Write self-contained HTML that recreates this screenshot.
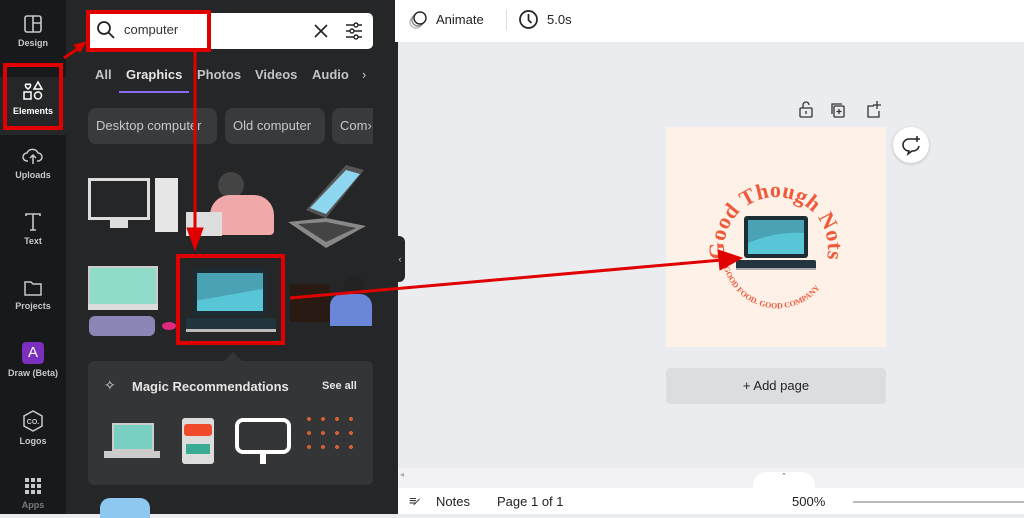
<!DOCTYPE html>
<html><head><meta charset="utf-8"><style>
*{margin:0;padding:0;box-sizing:border-box}
body{width:1024px;height:514px;overflow:hidden;position:relative;font-family:"Liberation Sans",sans-serif;background:#ebecf0}
.a{position:absolute}
.side{left:0;top:0;width:66px;height:514px;background:#18191b}
.nav{position:absolute;left:0;width:66px;text-align:center;color:#c7c8ca;font-size:9px;font-weight:bold}
.nav svg{display:block;margin:0 auto 4px}
.panel{left:66px;top:0;width:329px;height:514px;background:#252627}
.tab{position:absolute;top:67px;color:#c3c4c6;font-size:13px;font-weight:bold}
.chip{position:absolute;top:108px;height:36px;background:#393a3c;border-radius:8px;color:#c7c8ca;font-size:13px;line-height:36px;padding-left:8px;overflow:hidden;white-space:nowrap}
.red{border:4px solid #e00000}
</style></head><body>
<div class="a side"></div>
<div class="nav" style="top:14px"><svg width="20" height="20" viewBox="0 0 20 20" fill="none" stroke="#c7c8ca" stroke-width="1.6"><rect x="2" y="2" width="16" height="16" rx="2"/><path d="M10 2v16M10 9h8"/></svg>Design</div>
<div class="a" style="left:0;top:77px;width:66px;height:58px;background:#252627"></div>
<div class="nav" style="top:80px;color:#fff"><svg width="22" height="22" viewBox="0 0 22 22" fill="none" stroke="#fff" stroke-width="1.5"><path d="M6 9C2 6 3 3 6 4.5 9 3 10 6 6 9z"/><path d="M16 2l4 7h-8z"/><rect x="2" y="12" width="7" height="7"/><circle cx="16" cy="15.5" r="3.5"/></svg>Elements</div>
<div class="a red" style="left:3px;top:63px;width:60px;height:67px"></div>
<div class="nav" style="top:146px"><svg width="22" height="20" viewBox="0 0 22 20" fill="none" stroke="#c7c8ca" stroke-width="1.5"><path d="M6 15H5a4 4 0 010-8 6 6 0 0111 0 4 4 0 010 8h-1M11 18V9M8 12l3-3 3 3"/></svg>Uploads</div>
<div class="nav" style="top:212px"><svg width="20" height="20" viewBox="0 0 20 20" fill="none" stroke="#c7c8ca" stroke-width="1.6"><path d="M3 4V2h14v2M10 2v16M7 18h6"/></svg>Text</div>
<div class="nav" style="top:279px"><svg width="20" height="18" viewBox="0 0 20 18" fill="none" stroke="#c7c8ca" stroke-width="1.5"><path d="M2 3h6l2 2h8v11H2z"/></svg>Projects</div>
<div class="nav" style="top:342px"><div style="width:22px;height:22px;background:#7b2fbe;border-radius:4px;margin:0 auto 4px;color:#fff;font-size:15px;line-height:22px;font-weight:normal">A</div>Draw (Beta)</div>
<div class="nav" style="top:410px"><svg width="22" height="22" viewBox="0 0 22 22" fill="none" stroke="#c7c8ca" stroke-width="1.5"><path d="M11 1l9 5v10l-9 5-9-5V6z"/><text x="11" y="14" font-size="7" fill="#c7c8ca" stroke="none" text-anchor="middle" font-family="Liberation Sans" font-weight="bold">CO.</text></svg>Logos</div>
<div class="nav" style="top:476px"><svg width="20" height="20" viewBox="0 0 20 20" fill="#c7c8ca"><rect x="2" y="2" width="4" height="4"/><rect x="8" y="2" width="4" height="4"/><rect x="14" y="2" width="4" height="4"/><rect x="2" y="8" width="4" height="4"/><rect x="8" y="8" width="4" height="4"/><rect x="14" y="8" width="4" height="4"/><rect x="2" y="14" width="4" height="4"/><rect x="8" y="14" width="4" height="4"/><rect x="14" y="14" width="4" height="4"/></svg><span style="color:#77787a">Apps</span></div>

<div class="a panel"></div>
<div class="a" style="left:88px;top:13px;width:285px;height:36px;background:#fff;border-radius:5px"></div>
<div class="a red" style="left:86px;top:10px;width:125px;height:42px"></div>
<svg class="a" style="left:96px;top:20px" width="20" height="20" viewBox="0 0 20 20" fill="none" stroke="#222" stroke-width="1.8"><circle cx="8" cy="8" r="6"/><path d="M12.5 12.5L18 18"/></svg>
<div class="a" style="left:124px;top:22px;font-size:13px;color:#333">computer</div>
<svg class="a" style="left:314px;top:24px" width="14" height="14" viewBox="0 0 14 14" stroke="#222" stroke-width="1.6"><path d="M1 1l12 12M13 1L1 13"/></svg>
<svg class="a" style="left:344px;top:21px" width="20" height="20" viewBox="0 0 20 20" fill="none" stroke="#222" stroke-width="1.4"><path d="M2 4h16M2 10h16M2 16h16"/><circle cx="12" cy="4" r="2" fill="#fff"/><circle cx="8" cy="10" r="2" fill="#fff"/><circle cx="12" cy="16" r="2" fill="#fff"/></svg>
<div class="tab" style="left:95px">All</div>
<div class="tab" style="left:126px;color:#e5e5e6">Graphics</div>
<div class="a" style="left:119px;top:91px;width:70px;height:2px;background:#8b6cf0"></div>
<div class="tab" style="left:197px">Photos</div>
<div class="tab" style="left:255px">Videos</div>
<div class="tab" style="left:312px">Audio</div>
<div class="tab" style="left:362px;font-weight:normal">›</div>
<div class="chip" style="left:88px;width:129px">Desktop computer</div>
<div class="chip" style="left:225px;width:100px">Old computer</div>
<div class="chip" style="left:332px;width:41px;border-radius:8px 0 0 8px">Com›</div>

<div class="a" style="left:88px;top:178px;width:62px;height:42px;border:3px solid #ddd"></div>
<div class="a" style="left:110px;top:220px;width:18px;height:8px;background:#ddd"></div>
<div class="a" style="left:155px;top:178px;width:23px;height:54px;background:#e6e6e6"></div>
<div class="a" style="left:218px;top:172px;width:26px;height:26px;border-radius:50%;background:#444"></div>
<div class="a" style="left:210px;top:195px;width:64px;height:40px;border-radius:20px 20px 4px 4px;background:#f0a8a8"></div>
<div class="a" style="left:186px;top:212px;width:36px;height:24px;background:#ddd"></div>
<svg class="a" style="left:286px;top:160px" width="82" height="90" viewBox="0 0 82 90"><path d="M20 50L60 5 78 10 40 58z" fill="#555"/><path d="M24 48L60 10 74 14 40 54z" fill="#8fd6f0"/><path d="M2 62L40 58 80 66 40 88z" fill="#888"/><path d="M12 64L40 62 70 68 40 82z" fill="#444"/></svg>
<div class="a" style="left:88px;top:266px;width:70px;height:40px;background:#8fdcc8;border:2px solid #ccc"></div>
<div class="a" style="left:88px;top:304px;width:70px;height:6px;background:#ddd"></div>
<div class="a" style="left:89px;top:316px;width:66px;height:20px;background:#8b86b6;border-radius:6px"></div>
<div class="a" style="left:162px;top:322px;width:14px;height:8px;background:#e0287f;border-radius:50%"></div>
<div class="a red" style="left:176px;top:254px;width:109px;height:91px"></div>
<div class="a" style="left:193px;top:268px;width:74px;height:48px;background:#1d2b33;border-radius:3px"></div>
<div class="a" style="left:197px;top:273px;width:66px;height:38px;background:linear-gradient(170deg,#4aa3b4 55%,#58c6d6 56%)"></div>
<div class="a" style="left:186px;top:318px;width:90px;height:12px;background:#22343d;border-radius:2px"></div>
<div class="a" style="left:186px;top:329px;width:90px;height:3px;background:#bbb"></div>
<div class="a" style="left:290px;top:284px;width:40px;height:38px;background:#2a1a14"></div>
<div class="a" style="left:344px;top:276px;width:20px;height:20px;border-radius:50%;background:#222"></div>
<div class="a" style="left:330px;top:294px;width:42px;height:32px;border-radius:12px 12px 0 0;background:#6a86d8"></div>
<div class="a" style="left:88px;top:361px;width:285px;height:124px;background:#343537;border-radius:6px"></div>
<div class="a" style="left:223px;top:352px;width:0;height:0;border-left:10px solid transparent;border-right:10px solid transparent;border-bottom:10px solid #343537"></div>
<div class="a" style="left:104px;top:377px;color:#ddd;font-size:14px">✧</div>
<div class="a" style="left:132px;top:379px;color:#e5e5e6;font-size:13px;font-weight:bold">Magic Recommendations</div>
<div class="a" style="left:322px;top:380px;color:#e5e5e6;font-size:11px;font-weight:bold">See all</div>
<div class="a" style="left:112px;top:423px;width:42px;height:28px;background:#79cfc1;border:2px solid #ccc"></div>
<div class="a" style="left:104px;top:451px;width:56px;height:7px;background:#ccc"></div>
<div class="a" style="left:182px;top:418px;width:32px;height:46px;background:#ddd;border-radius:3px"></div>
<div class="a" style="left:184px;top:424px;width:28px;height:12px;background:#ef4b2a;border-radius:3px"></div>
<div class="a" style="left:186px;top:444px;width:24px;height:10px;background:#3aac96"></div>
<div class="a" style="left:235px;top:418px;width:56px;height:36px;border:4px solid #fff;border-radius:8px"></div>
<div class="a" style="left:260px;top:454px;width:6px;height:10px;background:#fff"></div>
<div class="a" style="left:302px;top:412px;width:58px;height:40px;background:radial-gradient(#d06030 20%,transparent 21%) 0 0/14px 14px"></div>
<div class="a" style="left:100px;top:498px;width:50px;height:20px;background:#8ec8f0;border-radius:10px 10px 0 0"></div>

<div class="a" style="left:395px;top:0;width:629px;height:42px;background:#fff"></div>
<div class="a" style="left:395px;top:42px;width:3px;height:472px;background:#252627"></div>
<div class="a" style="left:395px;top:236px;width:10px;height:46px;background:#252627;border-radius:0 6px 6px 0;color:#ccc;font-size:9px;line-height:46px;text-align:center">‹</div>
<svg class="a" style="left:408px;top:10px" width="20" height="20" viewBox="0 0 20 20" fill="none" stroke-width="1.4"><circle cx="8" cy="12" r="6" stroke="#bbb"/><circle cx="10" cy="10" r="6" stroke="#888"/><circle cx="12" cy="8" r="6" stroke="#222" fill="#fff"/></svg>
<div class="a" style="left:436px;top:12px;font-size:13px;color:#222">Animate</div>
<div class="a" style="left:506px;top:10px;width:1px;height:20px;background:#ddd"></div>
<svg class="a" style="left:518px;top:9px" width="21" height="21" viewBox="0 0 21 21" fill="none" stroke="#222" stroke-width="1.7"><circle cx="10.5" cy="10.5" r="8.5"/><path d="M10.5 5v6l3 3"/></svg>
<div class="a" style="left:547px;top:12px;font-size:13px;color:#222">5.0s</div>

<svg class="a" style="left:798px;top:100px" width="86" height="20" viewBox="0 0 86 20" fill="none" stroke="#333" stroke-width="1.3"><rect x="2" y="8" width="12" height="9" rx="1"/><path d="M5 8V5a3 3 0 016 0M8 11v3"/><rect x="36" y="6" width="10" height="11" rx="1"/><path d="M34 14V4h10M41 9v5M38.5 11.5h5"/><path d="M76 6H70v11h11v-6M79 1v8M75 5h8"/></svg>
<div class="a" style="left:666px;top:127px;width:220px;height:220px;background:#fef2e8"></div>
<svg class="a" style="left:666px;top:127px" width="220" height="220" viewBox="0 0 220 220">
<defs><path id="c1" d="M61.1 139.8A52 52 0 1 1 158.9 139.8"/><path id="c2" d="M58 140A55 55 0 0 0 166 132"/></defs>
<text font-family="Liberation Serif" font-weight="bold" font-size="22" fill="#f05a3c" letter-spacing="0.3" text-anchor="middle"><textPath href="#c1" startOffset="50%">Good Though Nots</textPath></text>
<text font-family="Liberation Serif" font-weight="bold" font-size="8" fill="#f05a3c"><textPath href="#c2">GOOD FOOD. GOOD COMPANY</textPath></text>
<rect x="78" y="89" width="64" height="42" rx="3" fill="#1d2b33"/><rect x="82" y="93" width="56" height="34" fill="#4aa3b4"/><path d="M82 116Q110 104 138 106V127H82z" fill="#58c6d6"/><rect x="70" y="133" width="80" height="9" rx="2" fill="#22343d"/><rect x="70" y="141" width="80" height="2" fill="#aaa"/></svg>
<div class="a" style="left:893px;top:127px;width:36px;height:36px;border-radius:50%;background:#fff;box-shadow:0 1px 3px rgba(0,0,0,.2)"></div>
<svg class="a" style="left:900px;top:134px" width="22" height="22" viewBox="0 0 22 22" fill="none" stroke="#222" stroke-width="1.5"><path d="M14 5H9a6 6 0 000 12h0l-1 3 4-3h1a6 6 0 006-5"/><path d="M17 2v6M14 5h6"/></svg>
<div class="a" style="left:666px;top:368px;width:220px;height:36px;background:#dcdde1;border-radius:4px;text-align:center;line-height:36px;font-size:13px;color:#222">+ Add page</div>

<div class="a" style="left:398px;top:468px;width:626px;height:20px;background:#f2f2f4"></div>
<div class="a" style="left:400px;top:470px;font-size:8px;color:#aaa">◂</div>
<div class="a" style="left:753px;top:472px;width:62px;height:18px;background:#fff;border-radius:14px 14px 0 0;text-align:center;font-size:9px;color:#333">ˆ</div>
<div class="a" style="left:398px;top:488px;width:626px;height:26px;background:#fff"></div>
<div class="a" style="left:409px;top:493px;font-size:13px;color:#222">≡̷</div>
<div class="a" style="left:436px;top:494px;font-size:13px;color:#222">Notes</div>
<div class="a" style="left:497px;top:494px;font-size:13px;color:#222">Page 1 of 1</div>
<div class="a" style="left:792px;top:494px;font-size:13px;color:#222">500%</div>
<div class="a" style="left:853px;top:501px;width:171px;height:2px;background:#bbb"></div>

<svg class="a" style="left:0;top:0" width="1024" height="514" viewBox="0 0 1024 514">
<g stroke="#e00000" fill="#e00000">
<path d="M64 58L82 46" stroke-width="3"/><path d="M86 42L74 45 80 52z"/>
<path d="M195 52V232" stroke-width="3"/><path d="M187 228L195 250 203 228z"/>
<path d="M290 298L722 260" stroke-width="3"/><path d="M718 250L742 258 720 270z"/>
</g></svg>
</body></html>
